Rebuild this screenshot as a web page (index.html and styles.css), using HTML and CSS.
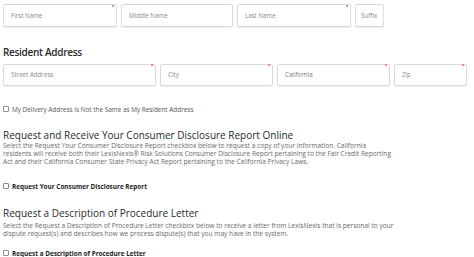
FILE: index.html
```html
<!DOCTYPE html>
<html lang="en">
<head>
  <meta charset="UTF-8">
  <meta name="viewport" content="width=device-width, initial-scale=1.0">
  <title>Consumer Disclosure Request</title>
  <link rel="stylesheet" href="styles.css">
</head>
<body>
  <div class="row name-row">
    <div class="field first req"><input type="text" placeholder="First Name"></div>
    <div class="field middle"><input type="text" placeholder="Middle Name"></div>
    <div class="field last req"><input type="text" placeholder="Last Name"></div>
    <div class="field suffix"><input type="text" placeholder="Suffix"></div>
  </div>

  <h3 class="sub-title">Resident Address</h3>
  <div class="row address-row">
    <div class="field street req"><input type="text" placeholder="Street Address"></div>
    <div class="field city req"><input type="text" placeholder="City"></div>
    <div class="field state req"><input type="text" value="California"></div>
    <div class="field zip req"><input type="text" placeholder="Zip"></div>
  </div>

  <label class="check plain"><input type="checkbox"> My Delivery Address Is Not the Same as My Resident Address</label>

  <h2 class="section-title">Request and Receive Your Consumer Disclosure Report Online</h2>
  <p class="info">Select the Request Your Consumer Disclosure Report checkbox below to request a copy of your information. California<br>
    residents will receive both their LexisNexis® Risk Solutions Consumer Disclosure Report pertaining to the Fair Credit Reporting<br>
    Act and their California Consumer State Privacy Act Report pertaining to the California Privacy Laws.</p>
  <label class="check"><input type="checkbox"> Request Your Consumer Disclosure Report</label>

  <h2 class="section-title second">Request a Description of Procedure Letter</h2>
  <p class="info second">Select the Request a Description of Procedure Letter checkbox below to receive a letter from LexisNexis that is personal to your<br>
    dispute request(s) and describes how we process dispute(s) that you may have in the system.</p>
  <label class="check"><input type="checkbox"> Request a Description of Procedure Letter</label>
</body>
</html>
```

FILE: styles.css
```css
body {
  margin: 1px 0 0 3px;
  font-family: "Open Sans", "Noto Sans", sans-serif;
  color: #333;
  background: #fff;
}

.row {
  display: flex;
  gap: 4px;
}

.field {
  position: relative;
}

.field input {
  box-sizing: border-box;
  width: 100%;
  height: 23px;
  margin: 0;
  padding: 0 0 0 7px;
  border: 1px solid #dadada;
  border-radius: 2px;
  box-shadow: 0 1px 1px rgba(0, 0, 0, 0.07);
  font-family: inherit;
  font-size: 6.2px;
  color: #7a7a7a;
  background: #fff;
  outline: none;
}

.field input::placeholder {
  color: #8a8a8a;
}

/* required marker */
.req::after {
  content: "";
  position: absolute;
  top: 4px;
  right: 3px;
  width: 2px;
  height: 2px;
  border-radius: 50%;
  background: #e46a78;
}

.first { width: 114px; }
.middle { width: 112px; }
.last { width: 114px; }
.suffix { width: 29px; }
.suffix input { padding: 0 0 0 5px; }

.address-row .field input { height: 22px; }
.street { width: 153px; }
.city { width: 113px; }
.state { width: 113px; }
.zip { width: 73px; }

.sub-title {
  margin: 18px 0 1px;
  font-size: 10px;
  font-weight: 600;
  line-height: 14px;
  letter-spacing: -0.3px;
  color: #2a2a2a;
}

.check {
  display: flex;
  align-items: center;
  gap: 3px;
  height: 9px;
  font-size: 6.4px;
  font-weight: 700;
  color: #1e1e1e;
}

.check.plain {
  margin-top: 19px;
  font-weight: 400;
  color: #555;
}

.check input {
  appearance: none;
  margin: 0;
  width: 6px;
  height: 6px;
  border: 1px solid #8c8c8c;
  border-radius: 1px;
  background: #fff;
}

.section-title {
  margin: 14px 0 0;
  font-size: 10px;
  font-weight: 400;
  line-height: 14px;
  color: #2a2a2a;
}

.section-title.second {
  margin-top: 15px;
}

.info {
  margin: 0 0 16px;
  font-size: 6.6px;
  line-height: 8px;
  color: #6a6a6a;
  white-space: nowrap;
}

.info.second {
  margin: 2px 0 11px;
}
```
